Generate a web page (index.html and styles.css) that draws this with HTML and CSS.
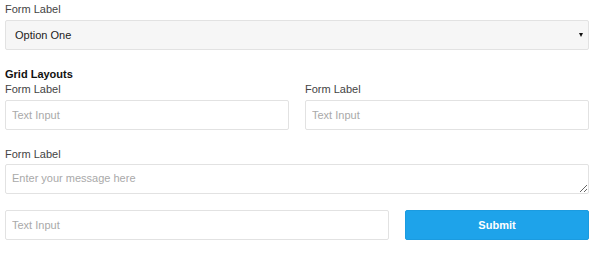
FILE: index.html
```html
<!DOCTYPE html>
<html lang="en">
<head>
    <meta charset="UTF-8">
    <meta name="viewport" content="width=device-width, initial-scale=1.0">
    <title>Form Layouts</title>
    <link rel="stylesheet" href="styles.css">
</head>
<body>
    <form class="form">
        <div class="form-group">
            <label class="form-label" for="option">Form Label</label>
            <div class="select-wrap">
                <select id="option" class="form-select">
                    <option>Option One</option>
                    <option>Option Two</option>
                </select>
            </div>
        </div>

        <h4 class="section-title">Grid Layouts</h4>
        <div class="grid grid-2 form-group">
            <div>
                <label class="form-label" for="first">Form Label</label>
                <input id="first" class="form-input" type="text" placeholder="Text Input">
            </div>
            <div>
                <label class="form-label" for="second">Form Label</label>
                <input id="second" class="form-input" type="text" placeholder="Text Input">
            </div>
        </div>

        <div class="form-group message-group">
            <label class="form-label" for="message">Form Label</label>
            <textarea id="message" class="form-input form-textarea" placeholder="Enter your message here"></textarea>
        </div>

        <div class="grid grid-3">
            <input class="form-input span-2" type="text" placeholder="Text Input">
            <button class="btn-submit" type="submit">Submit</button>
        </div>
    </form>
</body>
</html>
```

FILE: styles.css
```css
* {
    margin: 0;
    padding: 0;
    box-sizing: border-box;
    font-family: 'Liberation Sans', Arial, sans-serif;
}

body {
    background: #ffffff;
    color: #444444;
}

.form {
    width: 584px;
    margin-left: 5px;
    padding-top: 2px;
}

.form-group {
    margin-bottom: 17px;
}

.message-group {
    margin-bottom: 16px;
}

.form-label {
    display: block;
    font-size: 11px;
    line-height: 15px;
    color: #444444;
    margin-bottom: 3px;
}

.message-group .form-label {
    margin-bottom: 2px;
}

.section-title {
    font-size: 11px;
    line-height: 15px;
    font-weight: 700;
    color: #111111;
}

.select-wrap {
    position: relative;
}

.select-wrap::after {
    content: '';
    position: absolute;
    right: 6px;
    top: 13px;
    border-left: 2.5px solid transparent;
    border-right: 2.5px solid transparent;
    border-top: 4px solid #111111;
    pointer-events: none;
}

.form-select {
    appearance: none;
    -webkit-appearance: none;
    width: 100%;
    height: 30px;
    padding: 0 9px;
    font-size: 11px;
    color: #222222;
    background: #f6f6f6;
    border: 1px solid #e2e2e2;
    border-radius: 2px;
    outline: none;
}

.form-input {
    display: block;
    width: 100%;
    height: 30px;
    padding: 0 6px;
    font-size: 11px;
    color: #333333;
    background: #ffffff;
    border: 1px solid #e2e2e2;
    border-radius: 2px;
    outline: none;
}

.form-input::placeholder {
    color: #a9a9a9;
}

.form-textarea {
    padding: 6px 6px;
    line-height: 15px;
    resize: vertical;
}

.grid {
    display: grid;
    gap: 16px;
}

.grid-2 {
    grid-template-columns: 1fr 1fr;
}

.grid-3 {
    grid-template-columns: repeat(3, 1fr);
}

.span-2 {
    grid-column: span 2;
}

.btn-submit {
    height: 30px;
    font-size: 11px;
    font-weight: 700;
    color: #ffffff;
    background: #1ea3ea;
    border: 1px solid #1b9be0;
    border-radius: 2px;
    cursor: pointer;
}
```
